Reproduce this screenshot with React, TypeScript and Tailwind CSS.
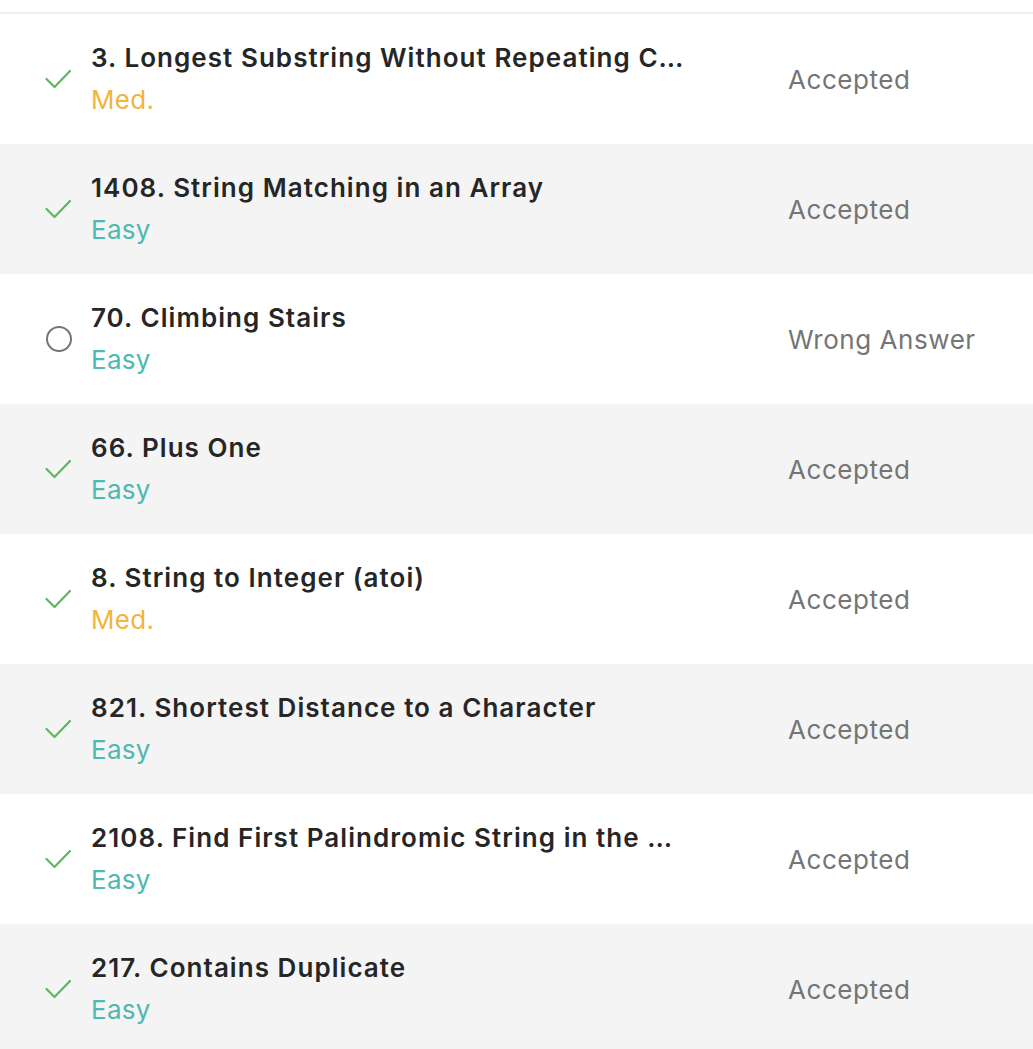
import React from 'react';

type Row = {
    title: string;
    difficulty: 'Easy' | 'Med.';
    status: string;
    solved: boolean;
};

const rows: Row[] = [
    { title: '3. Longest Substring Without Repeating Characters', difficulty: 'Med.', status: 'Accepted', solved: true },
    { title: '1408. String Matching in an Array', difficulty: 'Easy', status: 'Accepted', solved: true },
    { title: '70. Climbing Stairs', difficulty: 'Easy', status: 'Wrong Answer', solved: false },
    { title: '66. Plus One', difficulty: 'Easy', status: 'Accepted', solved: true },
    { title: '8. String to Integer (atoi)', difficulty: 'Med.', status: 'Accepted', solved: true },
    { title: '821. Shortest Distance to a Character', difficulty: 'Easy', status: 'Accepted', solved: true },
    { title: '2108. Find First Palindromic String in the Array', difficulty: 'Easy', status: 'Accepted', solved: true },
    { title: '217. Contains Duplicate', difficulty: 'Easy', status: 'Accepted', solved: true },
];

const CheckIcon = () => (
    <svg width="26" height="22" viewBox="0 0 26 22" fill="none">
        <path d="M1.5 11 L9.5 19 L25 3" stroke="#5cb85c" strokeWidth="2.2" strokeLinecap="round" strokeLinejoin="round" />
    </svg>
);

const CircleIcon = () => (
    <svg width="28" height="28" viewBox="0 0 28 28" fill="none">
        <circle cx="14" cy="14" r="12" stroke="#757575" strokeWidth="2" />
    </svg>
);

export default function App() {
    return (
        <div className="bg-white min-h-screen overflow-hidden" style={{ fontFamily: 'Inter, "Noto Sans", sans-serif' }}>
            <div className="h-[12px]" />
            <div className="border-t-2 border-[#eeeeee]">
                {rows.map((row, i) => (
                    <div
                        key={row.title}
                        className={`flex items-center h-[130px] ${i % 2 === 1 ? 'bg-[#f4f4f4]' : 'bg-white'}`}
                    >
                        <div className="w-[91px] pl-[45px] flex items-center shrink-0">
                            {row.solved ? <CheckIcon /> : <CircleIcon />}
                        </div>
                        <div className="w-[598px] shrink-0">
                            <div className="text-[26px] leading-[42px] font-semibold text-[#262626] truncate tracking-[1.05px]">
                                {row.title}
                            </div>
                            <div
                                className={`text-[26px] leading-[42px] tracking-[0.3px] ${row.difficulty === 'Easy' ? 'text-[#4fb8b3]' : 'text-[#f0b53a]'}`}
                            >
                                {row.difficulty}
                            </div>
                        </div>
                        <div className="ml-[99px] text-[26px] tracking-[0.55px] text-[#757575]">{row.status}</div>
                    </div>
                ))}
            </div>
        </div>
    );
}
